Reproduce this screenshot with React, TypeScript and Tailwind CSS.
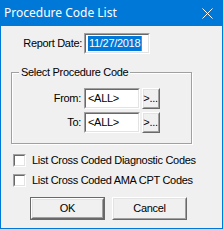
import React from "react";

const ui = { fontFamily: '"Liberation Sans", Arial, sans-serif' };

function Sunken({ className, children }: { className: string; children?: React.ReactNode }) {
  return (
    <div className={`border border-t-[#a0a0a0] border-l-[#a0a0a0] border-b-white border-r-white ${className}`}>
      <div className="w-full h-full border border-t-[#696969] border-l-[#696969] border-b-[#e3e3e3] border-r-[#e3e3e3] bg-white flex items-center">
        {children}
      </div>
    </div>
  );
}

function Raised({ className, children }: { className: string; children?: React.ReactNode }) {
  return (
    <div className={`border border-t-white border-l-white border-b-[#696969] border-r-[#696969] bg-[#f0f0f0] ${className}`}>
      <div className="w-full h-full border border-t-[#e3e3e3] border-l-[#e3e3e3] border-b-[#a0a0a0] border-r-[#a0a0a0] flex items-center justify-center">
        {children}
      </div>
    </div>
  );
}

function Check({ label }: { label: string }) {
  return (
    <div className="flex items-center ml-[12px] h-[13px]">
      <Sunken className="w-[13px] h-[13px]" />
      <span className="ml-[6px] text-[11px] text-black leading-none tracking-[-0.3px]">{label}</span>
    </div>
  );
}

export default function App() {
  return (
    <div className="w-[223px] h-[229px] bg-[#0078d7] flex flex-col overflow-hidden" style={ui}>
      <div className="h-[26px] flex items-center justify-between pl-[4px] pr-[10px] text-white">
        <span className="text-[12px]" style={{ fontFamily: '"Noto Sans", "Open Sans", sans-serif' }}>
          Procedure Code List
        </span>
        <svg width="11" height="11" viewBox="0 0 11 11" className="mt-[1px]">
          <path d="M0.5 0.5 L10.5 10.5 M10.5 0.5 L0.5 10.5" stroke="white" strokeWidth="1" />
        </svg>
      </div>
      <div className="flex-1 mx-px mb-px bg-[#f0f0f0] flex flex-col text-[11px] text-black tracking-[-0.3px]">
        <div className="flex items-center mt-[7px]">
          <span className="w-[81px] text-right">Report Date:</span>
          <Sunken className="ml-[2px] w-[66px] h-[21px]">
            <div className="ml-[2px] h-[15px] bg-[#0078d7] text-white flex items-center pl-[1px] pr-[1px] text-[11px]">
              11/27/2018
            </div>
            <div className="w-px h-[15px] bg-[#d07020]" />
          </Sunken>
        </div>

        <div className="relative ml-[10px] mt-[18px] w-[181px] h-[72px] border border-[#a0a0a0] shadow-[inset_1px_1px_0_#fff,1px_1px_0_#fff] flex flex-col pt-[15px] gap-[3px]">
          <span className="absolute left-[7px] top-[-7px] bg-[#f0f0f0] px-[2px] leading-[13px]">
            Select Procedure Code
          </span>
          <div className="flex items-center">
            <span className="w-[69px] text-right">From:</span>
            <Sunken className="ml-[3px] w-[56px] h-[21px]">
              <span className="ml-[2px]">&lt;ALL&gt;</span>
            </Sunken>
            <Raised className="ml-[2px] w-[18px] h-[21px]">
              <span className="-ml-[1px]">&gt;...</span>
            </Raised>
          </div>
          <div className="flex items-center">
            <span className="w-[69px] text-right">To:</span>
            <Sunken className="ml-[3px] w-[56px] h-[21px]">
              <span className="ml-[2px]">&lt;ALL&gt;</span>
            </Sunken>
            <Raised className="ml-[2px] w-[18px] h-[21px]">
              <span className="-ml-[1px]">&gt;...</span>
            </Raised>
          </div>
        </div>

        <div className="flex flex-col gap-[7px] mt-[10px]">
          <Check label="List Cross Coded Diagnostic Codes" />
          <Check label="List Cross Coded AMA CPT Codes" />
        </div>

        <div className="flex mt-[10px] ml-[29px] gap-[7px]">
          <div className="w-[75px] h-[23px] border border-[#696969]">
            <Raised className="w-full h-full">OK</Raised>
          </div>
          <Raised className="w-[75px] h-[23px]">Cancel</Raised>
        </div>
      </div>
    </div>
  );
}
